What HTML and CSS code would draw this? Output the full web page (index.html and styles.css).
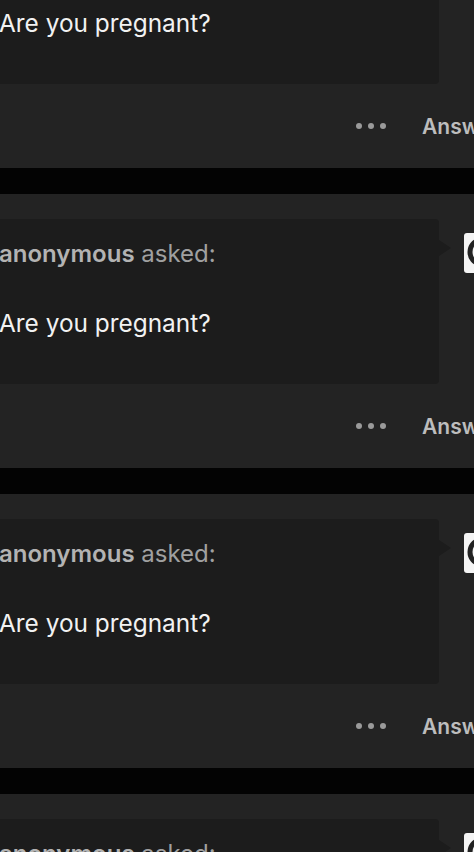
FILE: index.html
```html
<!DOCTYPE html>
<html lang="en">
<head>
    <meta charset="UTF-8">
    <meta name="viewport" content="width=device-width, initial-scale=1.0">
    <title>Inbox</title>
    <link rel="stylesheet" href="styles.css">
</head>
<body>
    <div class="feed">
        <div class="post">
            <div class="bubble">
                <p class="asker"><b>anonymous</b> asked:</p>
                <p class="question">Are you pregnant?</p>
            </div>
            <div class="avatar">
                <svg viewBox="0 0 40 40" width="40" height="40"><rect width="40" height="40" rx="3" fill="#f4f4f4"/><ellipse cx="15" cy="19" rx="9" ry="11" fill="none" stroke="#222" stroke-width="5"/></svg>
            </div>
            <div class="footer">
                <span class="dots"><i></i><i></i><i></i></span>
                <span class="answer">Answer</span>
            </div>
        </div>
        <div class="post">
            <div class="bubble">
                <p class="asker"><b>anonymous</b> asked:</p>
                <p class="question">Are you pregnant?</p>
            </div>
            <div class="avatar">
                <svg viewBox="0 0 40 40" width="40" height="40"><rect width="40" height="40" rx="3" fill="#f4f4f4"/><ellipse cx="15" cy="19" rx="9" ry="11" fill="none" stroke="#222" stroke-width="5"/></svg>
            </div>
            <div class="footer">
                <span class="dots"><i></i><i></i><i></i></span>
                <span class="answer">Answer</span>
            </div>
        </div>
        <div class="post">
            <div class="bubble">
                <p class="asker"><b>anonymous</b> asked:</p>
                <p class="question">Are you pregnant?</p>
            </div>
            <div class="avatar">
                <svg viewBox="0 0 40 40" width="40" height="40"><rect width="40" height="40" rx="3" fill="#f4f4f4"/><ellipse cx="15" cy="19" rx="9" ry="11" fill="none" stroke="#222" stroke-width="5"/></svg>
            </div>
            <div class="footer">
                <span class="dots"><i></i><i></i><i></i></span>
                <span class="answer">Answer</span>
            </div>
        </div>
        <div class="post">
            <div class="bubble">
                <p class="asker"><b>anonymous</b> asked:</p>
                <p class="question">Are you pregnant?</p>
            </div>
            <div class="avatar">
                <svg viewBox="0 0 40 40" width="40" height="40"><rect width="40" height="40" rx="3" fill="#f4f4f4"/><ellipse cx="15" cy="19" rx="9" ry="11" fill="none" stroke="#222" stroke-width="5"/></svg>
            </div>
            <div class="footer">
                <span class="dots"><i></i><i></i><i></i></span>
                <span class="answer">Answer</span>
            </div>
        </div>
    </div>
</body>
</html>
```
FILE: styles.css
```css
*{
    margin: 0;
    padding: 0;
    box-sizing: border-box;
}
body{
    background-color: #030303;
    overflow: hidden;
    height: 852px;
    font-family: "Inter", "Liberation Sans", sans-serif;
}
.feed{
    width: 564px;
    margin-top: -106px;
    margin-left: -40px;
    display: flex;
    flex-direction: column;
    gap: 26px;
}
.post{
    height: 274px;
    background-color: #232323;
    padding: 25px 20px 0 20px;
    display: grid;
    grid-template-columns: 459px 40px;
    column-gap: 25px;
    align-items: start;
}
.bubble{
    position: relative;
    height: 165px;
    background-color: #1c1c1c;
    border-radius: 4px;
    padding: 22px 19px 0 19px;
}
.bubble::after{
    content: "";
    position: absolute;
    top: 21px;
    right: -12px;
    border-top: 8px solid transparent;
    border-bottom: 8px solid transparent;
    border-left: 12px solid #1c1c1c;
}
.asker{
    font-size: 24px;
    line-height: 26px;
    color: #a0a0a0;
}
.asker b{
    font-weight: 600;
    color: #b3b3b3;
}
.question{
    margin-top: 43px;
    font-size: 24.4px;
    line-height: 26px;
    color: #f2f2f2;
}
.avatar{
    margin-top: 14px;
    height: 40px;
}
.avatar svg{
    display: block;
}
.footer{
    grid-column: 1 / 3;
    height: 83px;
    display: flex;
    align-items: center;
    justify-content: flex-end;
    gap: 36px;
}
.dots{
    display: flex;
    gap: 6px;
}
.dots i{
    width: 6px;
    height: 6px;
    border-radius: 50%;
    background-color: #9a9a9a;
}
.answer{
    width: 82px;
    font-size: 21px;
    font-weight: 600;
    color: #bdbdbd;
}
```
